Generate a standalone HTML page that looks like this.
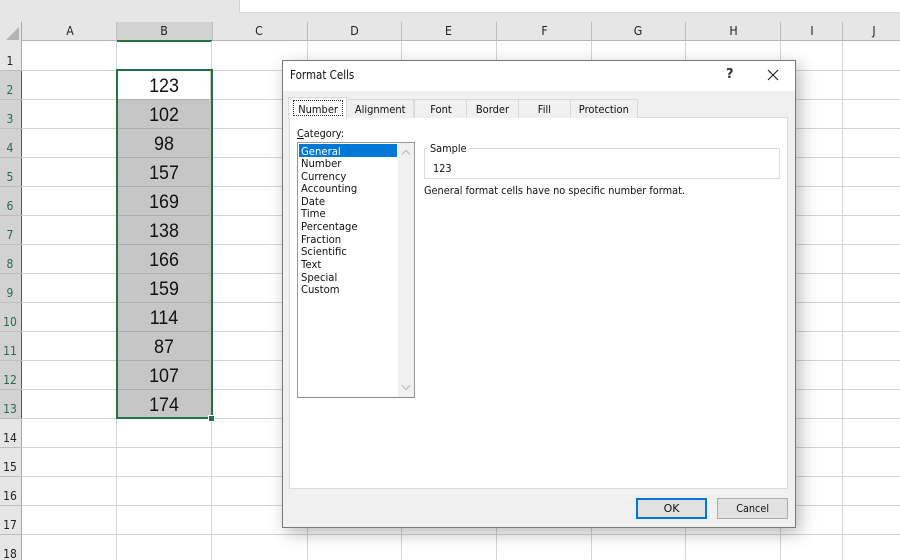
<!DOCTYPE html>
<html><head><meta charset="utf-8"><style>
html,body{margin:0;padding:0;background:#fff}
#p{position:relative;width:900px;height:560px;overflow:hidden;background:#fff;font-family:"DejaVu Sans","Liberation Sans",sans-serif;color:#1a1a1a}
#p div{position:absolute;box-sizing:border-box}
.v{top:41px;width:1px;height:519px;background:#d4d4d4}
.h{left:22px;width:878px;height:1px;background:#d4d4d4}
.hs{top:22px;width:1px;height:19px;background:#bdbdbd}
.ch{top:24px;height:15px;font:12px/15px "DejaVu Sans",sans-serif;text-align:center;color:#222;transform:scaleX(.92)}
.rn{left:0;width:20px;text-align:center;font:12px/15px "DejaVu Sans",sans-serif;color:#222;height:15px;transform:scaleX(.9)}
.g{color:#2a6a4a}
.rs{left:0;width:22px;height:1px;background:#bdbdbd}
.sp{left:118px;width:92px;height:1px;background:#adadad}
.num{left:117px;width:94px;height:29px;text-align:center;font:19px/29px "Liberation Sans",sans-serif;color:#111;transform:scaleX(.94)}
.t{white-space:nowrap;font:11px/14px "DejaVu Sans",sans-serif;color:#111;transform-origin:0 50%;transform:scaleX(.886)}
.tab{top:99px;height:19px;background:#f0f0f0;border:1px solid #dadada;border-bottom:0;font:11px/19px "DejaVu Sans",sans-serif;text-align:center;color:#111}
.tab span{display:inline-block;transform:scaleX(.9)}
.li{left:301px;white-space:nowrap;font:11px/13px "DejaVu Sans",sans-serif;height:13px;color:#111;transform-origin:0 50%;transform:scaleX(.915)}
</style></head><body><div id="p">
<div style="left:0;top:0;width:240px;height:13px;background:#e6e6e6"></div>
<div style="left:239px;top:0;width:1px;height:12px;background:#d2d2d2"></div>
<div style="left:240px;top:12px;width:660px;height:1px;background:#d2d2d2"></div>
<div style="left:0;top:13px;width:900px;height:9px;background:#e6e6e6"></div>
<div style="left:0;top:22px;width:900px;height:19px;background:#e6e6e6"></div>
<div style="left:22px;top:40px;width:878px;height:1px;background:#b4b4b4"></div>
<div style="left:0;top:41px;width:22px;height:519px;background:#e6e6e6"></div>
<div style="left:21px;top:22px;width:1px;height:538px;background:#a9a9a9"></div>
<div style="left:116px;top:22px;width:96px;height:19px;background:#d2d2d2"></div>
<div style="left:116px;top:40px;width:96px;height:2px;background:#217346"></div>
<div style="left:0;top:70px;width:22px;height:348px;background:#d2d2d2"></div>
<div style="left:21px;top:70px;width:1px;height:348px;background:#217346"></div>
<svg style="position:absolute;left:6px;top:27px" width="13" height="13"><path d="M13 0V13H0Z" fill="#b4b4b4"/></svg>

<div class="hs" style="left:116px"></div><div class="hs" style="left:212px"></div><div class="hs" style="left:307px"></div><div class="hs" style="left:401px"></div><div class="hs" style="left:496px"></div><div class="hs" style="left:591px"></div><div class="hs" style="left:685px"></div><div class="hs" style="left:780px"></div><div class="hs" style="left:842px"></div>

<div class="ch" style="left:23px;width:94px">A</div><div class="ch" style="left:116px;width:96px">B</div><div class="ch" style="left:212px;width:94px">C</div><div class="ch" style="left:307px;width:95px">D</div><div class="ch" style="left:401px;width:95px">E</div><div class="ch" style="left:497px;width:95px">F</div><div class="ch" style="left:591px;width:94px">G</div><div class="ch" style="left:686px;width:95px">H</div><div class="ch" style="left:781px;width:62px">I</div><div class="ch" style="left:845px;width:58px">J</div>

<div class="v" style="left:116px"></div><div class="v" style="left:211px"></div><div class="v" style="left:307px"></div><div class="v" style="left:401px"></div><div class="v" style="left:496px"></div><div class="v" style="left:591px"></div><div class="v" style="left:685px"></div><div class="v" style="left:780px"></div><div class="v" style="left:842px"></div>

<div class="h" style="top:70px"></div><div class="h" style="top:99px"></div><div class="h" style="top:128px"></div><div class="h" style="top:157px"></div><div class="h" style="top:186px"></div><div class="h" style="top:215px"></div><div class="h" style="top:244px"></div><div class="h" style="top:273px"></div><div class="h" style="top:302px"></div><div class="h" style="top:331px"></div><div class="h" style="top:360px"></div><div class="h" style="top:389px"></div><div class="h" style="top:418px"></div><div class="h" style="top:447px"></div><div class="h" style="top:476px"></div><div class="h" style="top:505px"></div><div class="h" style="top:534px"></div>

<div class="rs" style="top:70px"></div><div class="rs" style="top:99px"></div><div class="rs" style="top:128px"></div><div class="rs" style="top:157px"></div><div class="rs" style="top:186px"></div><div class="rs" style="top:215px"></div><div class="rs" style="top:244px"></div><div class="rs" style="top:273px"></div><div class="rs" style="top:302px"></div><div class="rs" style="top:331px"></div><div class="rs" style="top:360px"></div><div class="rs" style="top:389px"></div><div class="rs" style="top:418px"></div><div class="rs" style="top:447px"></div><div class="rs" style="top:476px"></div><div class="rs" style="top:505px"></div><div class="rs" style="top:534px"></div>

<div class="rn" style="top:54px">1</div><div class="rn g" style="top:83px">2</div><div class="rn g" style="top:112px">3</div><div class="rn g" style="top:141px">4</div><div class="rn g" style="top:170px">5</div><div class="rn g" style="top:199px">6</div><div class="rn g" style="top:228px">7</div><div class="rn g" style="top:257px">8</div><div class="rn g" style="top:286px">9</div><div class="rn g" style="top:315px">10</div><div class="rn g" style="top:344px">11</div><div class="rn g" style="top:373px">12</div><div class="rn g" style="top:402px">13</div><div class="rn" style="top:431px">14</div><div class="rn" style="top:460px">15</div><div class="rn" style="top:489px">16</div><div class="rn" style="top:518px">17</div><div class="rn" style="top:547px">18</div>

<div style="left:116px;top:70px;width:96px;height:348px;background:#c6c6c6"></div>
<div style="left:118px;top:71px;width:92px;height:28px;background:#fff"></div>
<div class="sp" style="top:128px"></div><div class="sp" style="top:157px"></div><div class="sp" style="top:186px"></div><div class="sp" style="top:215px"></div><div class="sp" style="top:244px"></div><div class="sp" style="top:273px"></div><div class="sp" style="top:302px"></div><div class="sp" style="top:331px"></div><div class="sp" style="top:360px"></div><div class="sp" style="top:389px"></div>
<div class="sp" style="top:99px;background:#b4b4b4"></div>
<div style="left:116px;top:69px;width:97px;height:350px;border:2px solid #217346"></div>
<div style="left:209px;top:416px;width:5px;height:5px;background:#217346;outline:1px solid #fff"></div>

<div class="num" style="top:72px">123</div><div class="num" style="top:101px">102</div><div class="num" style="top:130px">98</div><div class="num" style="top:159px">157</div><div class="num" style="top:188px">169</div><div class="num" style="top:217px">138</div><div class="num" style="top:246px">166</div><div class="num" style="top:275px">159</div><div class="num" style="top:304px">114</div><div class="num" style="top:333px">87</div><div class="num" style="top:362px">107</div><div class="num" style="top:391px">174</div>

<div style="left:282px;top:60px;width:514px;height:468px;background:#f0f0f0;border:1px solid #7a7a7a;box-shadow:4px 5px 16px rgba(0,0,0,.28)"></div>
<div style="left:283px;top:61px;width:512px;height:30px;background:#fff"></div>
<div class="t" style="left:290px;top:68px;font-size:12px;transform:scaleX(.86)">Format Cells</div>
<div class="t" style="left:726px;top:68px;font-size:13px;font-weight:bold;color:#333;transform:none">?</div>
<svg style="position:absolute;left:767px;top:69px" width="12" height="12"><path d="M1 1L11 11M11 1L1 11" stroke="#222" stroke-width="1.1" fill="none"/></svg>

<div style="left:289px;top:117px;width:499px;height:372px;background:#fff;border:1px solid #dadada"></div>
<div class="tab" style="left:346px;width:68px"><span>Alignment</span></div>
<div class="tab" style="left:414px;width:53px"><span>Font</span></div>
<div class="tab" style="left:466px;width:53px"><span>Border</span></div>
<div class="tab" style="left:518px;width:53px"><span>Fill</span></div>
<div class="tab" style="left:570px;width:68px"><span>Protection</span></div>
<div style="left:288px;top:97px;width:59px;height:22px;background:#fff;border:1px solid #dadada;border-bottom:0"></div>
<div style="left:293px;top:100px;width:50px;height:16px;border:1px dotted #333;font:11px/17px 'DejaVu Sans',sans-serif;text-align:center;color:#111"><span style="display:inline-block;transform:scaleX(.9)">Number</span></div>

<div class="t" style="left:297px;top:127px"><u>C</u>ategory:</div>
<div style="left:297px;top:142px;width:118px;height:256px;background:#fff;border:1px solid #9a9a9a;border-bottom-color:#8a8a8a"></div>
<div style="left:398px;top:143px;width:16px;height:254px;background:#f0f0f0"></div>
<svg style="position:absolute;left:401px;top:149px" width="10" height="7"><path d="M1 5.5L5 1.5L9 5.5" stroke="#c4c4c4" stroke-width="1.5" fill="none"/></svg>
<svg style="position:absolute;left:401px;top:384px" width="10" height="7"><path d="M1 1.5L5 5.5L9 1.5" stroke="#c4c4c4" stroke-width="1.5" fill="none"/></svg>
<div style="left:299px;top:144px;width:98px;height:13px;background:#0078d7"></div>
<div class="li" style="top:145px;color:#fff">General</div>
<div class="li" style="top:157px">Number</div>
<div class="li" style="top:170px">Currency</div>
<div class="li" style="top:182px">Accounting</div>
<div class="li" style="top:195px">Date</div>
<div class="li" style="top:207px">Time</div>
<div class="li" style="top:220px">Percentage</div>
<div class="li" style="top:233px">Fraction</div>
<div class="li" style="top:245px">Scientific</div>
<div class="li" style="top:258px">Text</div>
<div class="li" style="top:271px">Special</div>
<div class="li" style="top:283px">Custom</div>

<div style="left:424px;top:148px;width:356px;height:31px;border:1px solid #dcdcdc"></div>
<div style="left:427px;top:142px;width:42px;height:14px;background:#fff"></div>
<div class="t" style="left:430px;top:142px">Sample</div>
<div class="t" style="left:433px;top:162px">123</div>
<div class="t" style="left:424px;top:184px">General format cells have no specific number format.</div>

<div style="left:636px;top:498px;width:71px;height:21px;background:#e1e1e1;border:2px solid #0078d7;font:11px/17px 'DejaVu Sans',sans-serif;text-align:center;color:#111">OK</div>
<div style="left:717px;top:498px;width:71px;height:21px;background:#e1e1e1;border:1px solid #adadad;font:11px/19px 'DejaVu Sans',sans-serif;text-align:center;color:#111"><span style="display:inline-block;transform:scaleX(.88)">Cancel</span></div>
</div></body></html>
